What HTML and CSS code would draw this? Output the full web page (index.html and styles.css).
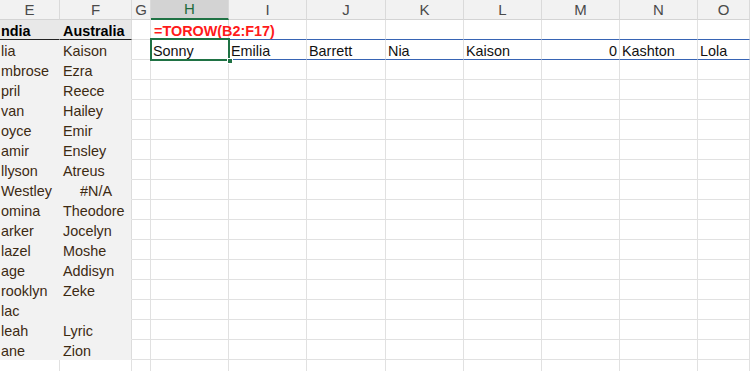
FILE: index.html
```html
<!DOCTYPE html>
<html lang="en">
<head>
<meta charset="utf-8">
<title>Sheet</title>
<link rel="stylesheet" href="styles.css">
</head>
<body>
<div class="sheet">
  <!-- column headers -->
  <div class="ch">E</div><div class="ch">F</div><div class="ch">G</div><div class="ch ch-active">H</div><div class="ch">I</div><div class="ch">J</div><div class="ch">K</div><div class="ch">L</div><div class="ch">M</div><div class="ch">N</div><div class="ch">O</div>

  <!-- row 1 -->
  <div class="c fill head">ndia</div><div class="c fill head fr">Australia</div><div class="c"></div><div class="c spill-top"><span class="formula">=TOROW(B2:F17)</span></div><div class="c spill-top"></div><div class="c spill-top"></div><div class="c spill-top"></div><div class="c spill-top"></div><div class="c spill-top"></div><div class="c spill-top"></div><div class="c spill-top"></div>

  <!-- row 2 -->
  <div class="c fill">lia</div><div class="c fill fr">Kaison</div><div class="c"></div><div class="c spill active">Sonny<span class="sel"><span class="handle"></span></span></div><div class="c spill">Emilia</div><div class="c spill">Barrett</div><div class="c spill">Nia</div><div class="c spill">Kaison</div><div class="c spill num">0</div><div class="c spill">Kashton</div><div class="c spill">Lola</div>

  <div class="c fill">mbrose</div><div class="c fill fr">Ezra</div><div class="c"></div><div class="c"></div><div class="c"></div><div class="c"></div><div class="c"></div><div class="c"></div><div class="c"></div><div class="c"></div><div class="c"></div>
  <div class="c fill">pril</div><div class="c fill fr">Reece</div><div class="c"></div><div class="c"></div><div class="c"></div><div class="c"></div><div class="c"></div><div class="c"></div><div class="c"></div><div class="c"></div><div class="c"></div>
  <div class="c fill">van</div><div class="c fill fr">Hailey</div><div class="c"></div><div class="c"></div><div class="c"></div><div class="c"></div><div class="c"></div><div class="c"></div><div class="c"></div><div class="c"></div><div class="c"></div>
  <div class="c fill">oyce</div><div class="c fill fr">Emir</div><div class="c"></div><div class="c"></div><div class="c"></div><div class="c"></div><div class="c"></div><div class="c"></div><div class="c"></div><div class="c"></div><div class="c"></div>
  <div class="c fill">amir</div><div class="c fill fr">Ensley</div><div class="c"></div><div class="c"></div><div class="c"></div><div class="c"></div><div class="c"></div><div class="c"></div><div class="c"></div><div class="c"></div><div class="c"></div>
  <div class="c fill">llyson</div><div class="c fill fr">Atreus</div><div class="c"></div><div class="c"></div><div class="c"></div><div class="c"></div><div class="c"></div><div class="c"></div><div class="c"></div><div class="c"></div><div class="c"></div>
  <div class="c fill">Westley</div><div class="c fill fr err">#N/A</div><div class="c"></div><div class="c"></div><div class="c"></div><div class="c"></div><div class="c"></div><div class="c"></div><div class="c"></div><div class="c"></div><div class="c"></div>
  <div class="c fill">omina</div><div class="c fill fr">Theodore</div><div class="c"></div><div class="c"></div><div class="c"></div><div class="c"></div><div class="c"></div><div class="c"></div><div class="c"></div><div class="c"></div><div class="c"></div>
  <div class="c fill">arker</div><div class="c fill fr">Jocelyn</div><div class="c"></div><div class="c"></div><div class="c"></div><div class="c"></div><div class="c"></div><div class="c"></div><div class="c"></div><div class="c"></div><div class="c"></div>
  <div class="c fill">lazel</div><div class="c fill fr">Moshe</div><div class="c"></div><div class="c"></div><div class="c"></div><div class="c"></div><div class="c"></div><div class="c"></div><div class="c"></div><div class="c"></div><div class="c"></div>
  <div class="c fill">age</div><div class="c fill fr">Addisyn</div><div class="c"></div><div class="c"></div><div class="c"></div><div class="c"></div><div class="c"></div><div class="c"></div><div class="c"></div><div class="c"></div><div class="c"></div>
  <div class="c fill">rooklyn</div><div class="c fill fr">Zeke</div><div class="c"></div><div class="c"></div><div class="c"></div><div class="c"></div><div class="c"></div><div class="c"></div><div class="c"></div><div class="c"></div><div class="c"></div>
  <div class="c fill">lac</div><div class="c fill fr"></div><div class="c"></div><div class="c"></div><div class="c"></div><div class="c"></div><div class="c"></div><div class="c"></div><div class="c"></div><div class="c"></div><div class="c"></div>
  <div class="c fill">leah</div><div class="c fill fr">Lyric</div><div class="c"></div><div class="c"></div><div class="c"></div><div class="c"></div><div class="c"></div><div class="c"></div><div class="c"></div><div class="c"></div><div class="c"></div>
  <div class="c fill">ane</div><div class="c fill fr">Zion</div><div class="c"></div><div class="c"></div><div class="c"></div><div class="c"></div><div class="c"></div><div class="c"></div><div class="c"></div><div class="c"></div><div class="c"></div>

  <!-- row 18 -->
  <div class="c"></div><div class="c"></div><div class="c"></div><div class="c"></div><div class="c"></div><div class="c"></div><div class="c"></div><div class="c"></div><div class="c"></div><div class="c"></div><div class="c"></div>
</div>
</body>
</html>
```

FILE: styles.css
```css
html, body {
  margin: 0;
  padding: 0;
  background: #ffffff;
  overflow: hidden;
}

.sheet {
  display: grid;
  grid-template-columns: 60px 72px 19px 78px 78px 79px 78px 78px 78px 78px 52px;
  grid-auto-rows: 20px;
  width: 750px;
  font-family: "Liberation Sans", Arial, sans-serif;
  font-size: 14.4px;
  color: #000000;
}

/* column header strip */
.ch {
  box-sizing: border-box;
  background: #f2f2f2;
  border-right: 1px solid #dadada;
  border-bottom: 1px solid #d4d4d4;
  color: #4a4a4a;
  font-size: 15px;
  line-height: 19px;
  text-align: center;
}

.ch-active {
  background: #d3d3d3;
  color: #1d6b3c;
  border-bottom: 2px solid #1f7244;
  line-height: 18px;
}

/* cells */
.c {
  box-sizing: border-box;
  border-right: 1px solid #e1e1e1;
  border-bottom: 1px solid #e1e1e1;
  padding: 3px 2px 0;
  line-height: 16px;
  white-space: nowrap;
  overflow: hidden;
  position: relative;
}

/* shaded source table in E:F */
.fill {
  background: #f2f2f2;
  border-right-color: #f2f2f2;
  border-bottom-color: #f2f2f2;
  color: #3d2a12;
  padding-left: 1px;
}

.fill.fr {
  border-right-color: #dcdcdc;
  padding-left: 3px;
}

.head {
  background: #e8e8e8;
  border-bottom: 1px solid #222222;
  border-right-color: #e8e8e8;
  color: #000000;
  font-weight: bold;
}

.head.fr {
  border-right-color: #dcdcdc;
}

.err {
  text-align: center;
}

/* the formula in H1 runs over into I1 */
.formula {
  color: #ff1a1a;
  font-weight: bold;
  position: relative;
  z-index: 2;
}

.c:has(.formula) {
  overflow: visible;
  padding-left: 3px;
}

/* spilled range H2:O2 */
.spill-top {
  border-bottom-color: #3764b4;
}

.spill {
  border-bottom-color: #3764b4;
  color: #111111;
}

.num {
  text-align: right;
}

.active {
  overflow: visible;
  padding-left: 2px;
}

/* active cell outline with fill handle */
.sel {
  position: absolute;
  left: -1px;
  top: -2px;
  right: -2px;
  bottom: -2px;
  border: 2px solid #1f7244;
  z-index: 3;
}

.handle {
  position: absolute;
  right: -5px;
  bottom: -5px;
  width: 6px;
  height: 6px;
  background: #1f7244;
  border: 1px solid #ffffff;
  box-sizing: border-box;
}
```
